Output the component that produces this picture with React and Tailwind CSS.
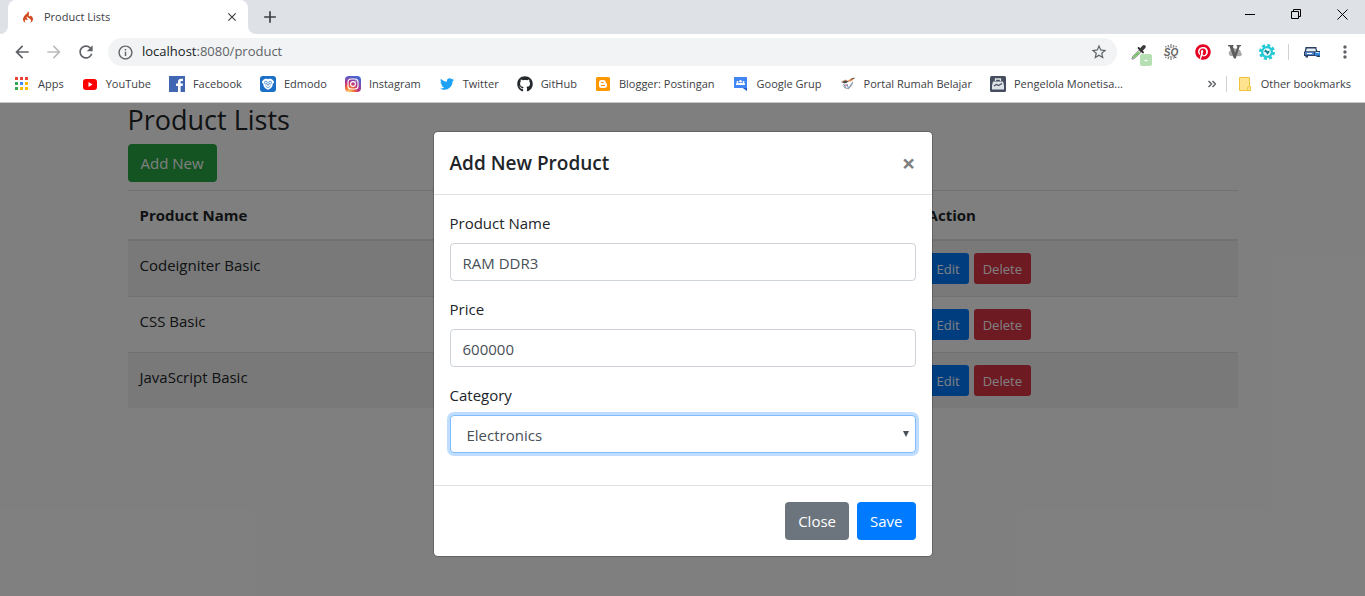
import React, { useState } from "react";
import {
  MdArrowBack,
  MdArrowForward,
  MdRefresh,
  MdInfoOutline,
  MdStarBorder,
  MdMoreVert,
  MdClose,
  MdAdd,
} from "react-icons/md";
import { FaGithub, FaTwitter, FaPinterest } from "react-icons/fa";
import { SiCodeigniter } from "react-icons/si";

function AppsIcon() {
  const colors = [
    "#ea4335", "#ea4335", "#ea4335",
    "#34a853", "#4285f4", "#fbbc05",
    "#34a853", "#fbbc05", "#fbbc05",
  ];
  return (
    <svg width="16" height="16" viewBox="0 0 16 16">
      {colors.map((c, i) => (
        <rect key={i} x={1 + (i % 3) * 5} y={1 + Math.floor(i / 3) * 5} width="3" height="3" fill={c} />
      ))}
    </svg>
  );
}

function YouTubeIcon() {
  return (
    <svg width="16" height="16" viewBox="0 0 16 16">
      <rect x="1" y="3" width="14" height="11" rx="3" fill="#f00" />
      <path d="M6.500 6v5l4-2.500z" fill="#fff" />
    </svg>
  );
}

function FacebookIcon() {
  return (
    <svg width="16" height="16" viewBox="0 0 16 16">
      <rect width="16" height="16" fill="#4267b2" />
      <path d="M9 16v-6H7V7.600h2V6c0-2.200 1.200-3.300 3.200-3.300.8 0 1.500.1 1.800.1v2.200h-1.200c-1 0-1.200.5-1.200 1.200v1.400H14L13.600 10h-2v6z" fill="#fff" />
    </svg>
  );
}

function EdmodoIcon() {
  return (
    <svg width="16" height="16" viewBox="0 0 16 16">
      <rect width="16" height="16" rx="3" fill="#1a6fc9" />
      <path d="M8 3.300C6 2.300 4 3 3.200 4.200 2.500 4.600 2 5.200 1.800 6c.3.900.8 1.400 1.400 1.700C3.200 10.500 5 12.600 8 13.700c3-1.100 4.800-3.200 4.800-6 .6-.3 1.100-.8 1.400-1.700-.2-.8-.7-1.400-1.400-1.800C12 3 10 2.300 8 3.300z" fill="#fff" />
      <circle cx="5.900" cy="6.600" r="1.400" fill="none" stroke="#1a6fc9" strokeWidth=".7" />
      <circle cx="10.100" cy="6.600" r="1.400" fill="none" stroke="#1a6fc9" strokeWidth=".7" />
      <path d="M7.200 8.500h1.600L8 9.500zM5.500 10 8 11.800l2.500-1.800" fill="none" stroke="#1a6fc9" strokeWidth=".6" />
    </svg>
  );
}

function InstagramIcon() {
  return (
    <svg width="16" height="16" viewBox="0 0 16 16">
      <defs>
        <radialGradient id="ig" cx="4" cy="16" r="16" gradientUnits="userSpaceOnUse">
          <stop offset="0" stopColor="#fed576" />
          <stop offset=".3" stopColor="#f47133" />
          <stop offset=".6" stopColor="#bc3081" />
          <stop offset="1" stopColor="#4c63d2" />
        </radialGradient>
      </defs>
      <rect width="16" height="16" rx="4" fill="url(#ig)" />
      <rect x="3" y="3" width="10" height="10" rx="3" fill="none" stroke="#fff" strokeWidth="1.100" />
      <circle cx="8" cy="8" r="2.400" fill="none" stroke="#fff" strokeWidth="1.100" />
      <circle cx="10.900" cy="5.100" r=".7" fill="#fff" />
    </svg>
  );
}

function BloggerIcon() {
  return (
    <svg width="16" height="16" viewBox="0 0 16 16">
      <rect x="1" y="1" width="14" height="14" rx="1.500" fill="#ff9800" />
      <path d="M6.300 4h2.200c1.400 0 2.300 1 2.300 2.200 0 .9.200 1 .8 1.100.3.100.4.300.4.600v1.800c0 1.300-1 2.300-2.300 2.300H6.300C5 12 4 11 4 9.700V6.300C4 5 5 4 6.300 4z" fill="#fff" />
      <path d="M6.300 6.400h2M6.300 9.500h3.400" stroke="#ff9800" strokeWidth="1" strokeLinecap="round" />
    </svg>
  );
}

function GroupsIcon() {
  return (
    <svg width="16" height="16" viewBox="0 0 16 16">
      <path d="M1 1h13v14l-4-3H1z" fill="#4285f4" />
      <path d="M10 12h4v3z" fill="#2a63c8" />
      <circle cx="4.500" cy="6" r="1" fill="#fff" />
      <circle cx="7.500" cy="5.200" r="1.200" fill="#fff" />
      <circle cx="10.500" cy="6" r="1" fill="#fff" />
      <path d="M3 9V8c0-.6.700-1 1.500-1s1 .2 1 .2S6.300 7 7.500 7s2 .2 2 .2.300-.2 1-.2c.8 0 1.500.4 1.500 1v1z" fill="#fff" />
    </svg>
  );
}

function PortalIcon() {
  return (
    <svg width="16" height="16" viewBox="0 0 16 16">
      <path d="M1 6 5.500 4 9 5.500 5 7.500z" fill="#4a4a4a" />
      <path d="M2 5.600 5.500 4l2 .8" stroke="#e0a070" strokeWidth=".8" fill="none" />
      <path d="M7.500 5.300C9.500 3 12 2 15 2c-1.500.8-2 2-4.500 3.500z" fill="#e08a50" />
      <path d="M11 3.200 14.500 2" stroke="#333" strokeWidth=".8" />
      <path d="m3.500 8 2.500 4M7 8l1.500 4.500L12 7" stroke="#6d93bb" strokeWidth="1" fill="none" />
      <path d="M3 9.500 5 12l3.500.8 3-3 1.300-4.300" stroke="#8b8b8b" strokeWidth=".8" fill="none" />
      <circle cx="6" cy="9.300" r=".8" fill="#c0392b" />
    </svg>
  );
}

function PengelolaIcon() {
  return (
    <svg width="16" height="16" viewBox="0 0 16 16">
      <rect width="16" height="16" rx="1.500" fill="#454d5e" />
      <path d="M5.500 5V3h5v2" fill="none" stroke="#dfe3e8" strokeWidth="1.300" />
      <path d="M3 5.500h10l1 4V13.500H2v-4z" fill="#dfe3e8" />
      <path d="m4 10 2.500-1.500 2 1L12 7.500" fill="none" stroke="#454d5e" strokeWidth="1.200" />
    </svg>
  );
}

function FolderIcon() {
  return (
    <svg width="16" height="16" viewBox="0 0 16 16">
      <path d="M2.500 1.500h10v9h1v4h-11z" fill="#ffe38f" stroke="#eec33f" />
      <path d="M10.500 14.500v-3.300l2-.7" fill="none" stroke="#eec33f" />
    </svg>
  );
}

function PickerIcon() {
  return (
    <svg width="16" height="16" viewBox="0 0 16 16" className="overflow-visible">
      <path d="m.8 15.200.8-2.700 7-7 2 2-7 7z" fill="#e8e8e8" stroke="#777" strokeWidth=".8" />
      <path d="m1.800 14.200.6-1.600 4.800-4.600 1.600.6-5.400 5z" fill="#57c242" />
      <path d="m7.600 4 4.400 4.400" stroke="#2f2f2f" strokeWidth="2" strokeLinecap="round" />
      <path d="m10 6 3-3.200" stroke="#3a3a3a" strokeWidth="3.600" strokeLinecap="round" />
      <rect x="9" y="10" width="12" height="12" rx="2" fill="#b7dfb4" />
      <path d="M13.500 16.500h3" stroke="#fff" strokeWidth="1.200" />
    </svg>
  );
}

function SeoquakeIcon() {
  return (
    <svg width="16" height="16" viewBox="0 0 16 16">
      <path d="M8 0v4M8 12v4M2.300 2.300 5 5M13.700 2.300 11 5M2.300 13.700 5 11M13.700 13.700 11 11M5 1l1 3M11 1l-1 3M5 15l1-3M11 15l-1-3" stroke="#858585" strokeWidth="1.300" />
      <text x="8" y="11.500" textAnchor="middle" fontSize="10" fontWeight="700" fontStyle="italic" fontFamily="Liberation Sans" fill="#666" stroke="#fff" strokeWidth="1.500" paintOrder="stroke">
        SQ
      </text>
    </svg>
  );
}

function VidIcon() {
  return (
    <svg width="16" height="16" viewBox="0 0 16 16">
      <path d="M3.500 12a3 3 0 0 1 0-5.500 4 4 0 0 1 6.500-1 3.500 3.500 0 0 1 4 3 2.200 2.200 0 0 1-.5 3.800z" fill="#a9a9a9" />
      <path d="M1 1h5.500v1.300H5.800L8 9l2.500-6.700H9.600V1H14v1.300h-1.200L8.700 14.500H6.900L2.400 2.300H1z" fill="#5c5c5c" />
    </svg>
  );
}

function GearIcon() {
  return (
    <svg width="16" height="16" viewBox="0 0 16 16">
      <circle cx="8" cy="8" r="6.700" fill="none" stroke="#25c9d6" strokeWidth="2.600" strokeDasharray="3.100 2.160" />
      <circle cx="8" cy="8" r="6" fill="#25c9d6" />
      <circle cx="8" cy="8" r="3.700" fill="#eefcfd" />
      <path d="M4.800 7.300 7 5.500l1.200 1.800 2.600-.8-1 2.700L8 10.800l-.5-2z" fill="#18808e" />
    </svg>
  );
}

function CarsIcon() {
  return (
    <svg width="18" height="16" viewBox="0 0 18 16">
      <path d="M2.500 3h11v1.500l.8 2.500H17v6h-3.500v-1H5v1.500H2.500V12H1V7.500h.8z" fill="#2b3f63" />
      <path d="M3.800 4.500h8.500l.7 2.700H3z" fill="#e6eef6" />
      <path d="M2 8h9v3H2z" fill="#4f83c6" />
      <path d="M4 9.500h5" stroke="#fff" />
      <path d="M12 8h5v3.500h-5z" fill="#2f8bea" />
      <path d="M12.800 8.500h3.400" stroke="#cfe4fa" />
    </svg>
  );
}

const bookmarks = [
  { name: "Apps", icon: <AppsIcon /> },
  { name: "YouTube", icon: <YouTubeIcon /> },
  { name: "Facebook", icon: <FacebookIcon /> },
  { name: "Edmodo", icon: <EdmodoIcon /> },
  { name: "Instagram", icon: <InstagramIcon /> },
  { name: "Twitter", icon: <FaTwitter size={14} color="#1da1f2" className="mx-px" /> },
  { name: "GitHub", icon: <FaGithub size={16} color="#24292e" /> },
  { name: "Blogger: Postingan", icon: <BloggerIcon /> },
  { name: "Google Grup", icon: <GroupsIcon /> },
  { name: "Portal Rumah Belajar", icon: <PortalIcon /> },
  { name: "Pengelola Monetisa...", icon: <PengelolaIcon /> },
];

const extensions = [
  { name: "Color picker", icon: <PickerIcon /> },
  { name: "SEOquake", icon: <SeoquakeIcon /> },
  { name: "Pinterest", icon: <FaPinterest size={16} color="#e60023" /> },
  { name: "Keyword tool", icon: <VidIcon /> },
  { name: "Settings helper", icon: <GearIcon /> },
];

const products = ["Codeigniter Basic", "CSS Basic", "JavaScript Basic"];

function TitleBar() {
  return (
    <div className="flex h-[34px] items-start bg-[#dee1e6] pl-2">
      <div className="relative flex h-[34px] w-60 items-center rounded-t-lg bg-white pl-3 pr-[9px]">
        <svg className="absolute -left-2 bottom-0" width="8" height="8" viewBox="0 0 8 8">
          <path d="M8 0v8H0a8 8 0 0 0 8-8z" fill="#fff" />
        </svg>
        <svg className="absolute -right-2 bottom-0" width="8" height="8" viewBox="0 0 8 8">
          <path d="M0 0v8h8a8 8 0 0 1-8-8z" fill="#fff" />
        </svg>
        <SiCodeigniter size={12} color="#cf4a1c" className="mx-[2px]" />
        <span className="ml-2 flex-1 text-[11px] text-[#3c4043]">Product Lists</span>
        <button aria-label="Close tab" className="text-[#3c4043]">
          <MdClose size={14} />
        </button>
      </div>
      <button aria-label="New tab" className="ml-3 flex h-[34px] w-5 items-center justify-center text-[#3c4043]">
        <MdAdd size={20} />
      </button>
      <div className="ml-auto flex h-7">
        <button aria-label="Minimize" className="flex w-[46px] items-center justify-center">
          <svg width="10" height="10" viewBox="0 0 10 10" stroke="#000">
            <path d="M0 5.500h10" />
          </svg>
        </button>
        <button aria-label="Restore" className="flex w-[46px] items-center justify-center">
          <svg width="10" height="10" viewBox="0 0 10 10" fill="none" stroke="#000">
            <path d="M.5 2.500h7v7h-7zM2.500 2.500v-2h7v7h-2" />
          </svg>
        </button>
        <button aria-label="Close window" className="flex w-[46px] items-center justify-center">
          <svg width="11" height="11" viewBox="0 0 11 11" stroke="#000">
            <path d="m.5.500 10 10M10.500.500l-10 10" />
          </svg>
        </button>
      </div>
    </div>
  );
}

function Toolbar() {
  return (
    <div className="flex h-9 items-center bg-white pl-3 pr-[10px] text-[#5f6368]">
      <div className="flex gap-3">
        <button aria-label="Back">
          <MdArrowBack size={20} />
        </button>
        <button aria-label="Forward" className="text-[#babcbe]">
          <MdArrowForward size={20} />
        </button>
        <button aria-label="Reload">
          <MdRefresh size={20} />
        </button>
      </div>
      <div className="ml-3 flex h-7 flex-1 items-center rounded-full bg-[#f1f3f4] px-[9px]">
        <MdInfoOutline size={17} />
        <a href="#url" className="ml-2 flex-1 text-[13px] text-[#5f6368]">
          <span className="text-[#202124]">localhost</span>:8080/product
        </a>
        <button aria-label="Bookmark this page">
          <MdStarBorder size={18} />
        </button>
      </div>
      <div className="ml-[6px] flex">
        {extensions.map((ext) => (
          <button key={ext.name} aria-label={ext.name} className="flex h-6 w-8 items-center justify-center">
            {ext.icon}
          </button>
        ))}
      </div>
      <div className="ml-[5px] h-4 w-px bg-[#cfd1d4]" />
      <button aria-label="Profile" className="ml-[14px]">
        <CarsIcon />
      </button>
      <button aria-label="Menu" className="ml-[14px]">
        <MdMoreVert size={20} />
      </button>
    </div>
  );
}

function BookmarksBar() {
  return (
    <div className="flex h-[33px] items-center border-b border-[#c8c9cb] bg-white pl-[14px] pr-[14px] pb-1 text-[11px] text-[#3c4043]">
      <nav className="flex flex-1 gap-[18px]">
        {bookmarks.map((b) => (
          <a key={b.name} href="#bookmark" className="flex items-center gap-2 whitespace-nowrap">
            {b.icon}
            {b.name}
          </a>
        ))}
      </nav>
      <button aria-label="More bookmarks">
        <svg width="8" height="8" viewBox="0 0 8 8" fill="none" stroke="#5f6368" strokeWidth="1.500">
          <path d="m.5 1 3 3-3 3M4.500 1l3 3-3 3" />
        </svg>
      </button>
      <div className="ml-[10px] mr-[10px] h-4 w-px bg-[#cfd1d4]" />
      <a href="#other" className="flex items-center gap-2">
        <FolderIcon />
        Other bookmarks
      </a>
    </div>
  );
}

function ProductPage() {
  return (
    <div className="mx-auto max-w-[1140px] px-[15px] text-[15px] leading-6 text-[#212529]">
      <h3 className="pt-px text-[27px] font-medium leading-8">Product Lists</h3>
      <button className="mt-2 h-[38px] rounded bg-[#28a745] px-[13px] text-white">Add New</button>
      <table className="mt-2 w-full border-collapse text-left">
        <thead>
          <tr className="border-t border-[#dee2e6]">
            <th className="w-[71%] border-b-2 border-[#dee2e6] p-3 font-bold">Product Name</th>
            <th className="border-b-2 border-[#dee2e6] p-3 font-bold">Action</th>
          </tr>
        </thead>
        <tbody>
          {products.map((name) => (
            <tr key={name} className="border-t border-[#dee2e6] odd:bg-[#f2f2f2]">
              <td className="p-3 align-top">{name}</td>
              <td className="p-3 align-top">
                <div className="flex gap-[5px] text-[13px] text-white">
                  <button className="h-[31px] rounded-[3px] bg-[#007bff] px-[9px]">Edit</button>
                  <button className="h-[31px] rounded-[3px] bg-[#dc3545] px-[9px]">Delete</button>
                </div>
              </td>
            </tr>
          ))}
        </tbody>
      </table>
    </div>
  );
}

function AddProductModal() {
  const [name, setName] = useState("RAM DDR3");
  const [price, setPrice] = useState("600000");
  const [category, setCategory] = useState("Electronics");

  return (
    <form
      role="dialog"
      aria-labelledby="modal-title"
      className="w-[500px] rounded-[5px] border border-black/20 bg-white bg-clip-padding text-[15px] leading-6 text-[#212529]"
    >
      <div className="flex h-[63px] items-center justify-between border-b border-[#dee2e6] px-4">
        <h5 id="modal-title" className="text-[19px] font-semibold">
          Add New Product
        </h5>
        <button type="button" aria-label="Close" className="text-2xl font-bold text-black/50">
          ×
        </button>
      </div>

      <div className="flex flex-col gap-4 px-4 pb-8 pt-4">
        <div>
          <label htmlFor="product-name" className="mb-2 block">
            Product Name
          </label>
          <input
            id="product-name"
            value={name}
            onChange={(e) => setName(e.target.value)}
            className="block h-[38px] w-full rounded border border-[#ced4da] px-3 pt-[2px] text-[#495057] outline-none"
          />
        </div>
        <div>
          <label htmlFor="price" className="mb-2 block">
            Price
          </label>
          <input
            id="price"
            value={price}
            onChange={(e) => setPrice(e.target.value)}
            className="block h-[38px] w-full rounded border border-[#ced4da] px-3 pt-[2px] text-[#495057] outline-none"
          />
        </div>
        <div>
          <label htmlFor="category" className="mb-2 block">
            Category
          </label>
          <div className="relative">
            <select
              id="category"
              value={category}
              onChange={(e) => setCategory(e.target.value)}
              className="block h-[38px] w-full appearance-none rounded border border-[#80bdff] bg-white px-4 pt-[2px] text-[#495057] shadow-[0_0_0_3px_#bfdeff] outline-none"
            >
              <option>Electronics</option>
            </select>
            <svg className="pointer-events-none absolute right-[7px] top-4" width="6" height="6" viewBox="0 0 6 6">
              <path d="M0 0h6L3 6z" fill="#495057" />
            </svg>
          </div>
        </div>
      </div>

      <div className="flex justify-end gap-2 border-t border-[#dee2e6] p-4 text-white">
        <button type="button" className="h-[38px] rounded bg-[#6c757d] px-[13px]">
          Close
        </button>
        <button type="button" className="h-[38px] rounded bg-[#007bff] px-[13px]">
          Save
        </button>
      </div>
    </form>
  );
}

export default function App() {
  return (
    <div className="flex min-h-screen flex-col bg-white font-['Open_Sans','Noto_Sans',sans-serif]">
      <header>
        <TitleBar />
        <Toolbar />
        <BookmarksBar />
      </header>
      <main className="relative flex-1">
        <ProductPage />
        {/* Backdrop and dialog */}
        <div className="absolute inset-0 flex items-start justify-center bg-black/50 pt-7">
          <AddProductModal />
        </div>
      </main>
    </div>
  );
}
